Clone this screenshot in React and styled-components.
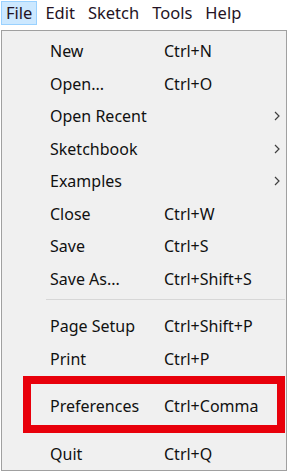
import React from 'react';
import styled, { createGlobalStyle } from 'styled-components';

const GlobalStyle = createGlobalStyle`
  html, body {
    margin: 0;
    padding: 0;
    background: #ffffff;
  }
  body {
    font-family: "Noto Sans", "Open Sans", sans-serif;
    color: #111111;
  }
`;

const Page = styled.div`
  width: 290px;
  height: 474px;
  overflow: hidden;
  background: #ffffff;
`;

const MenuBar = styled.div`
  display: flex;
  align-items: flex-start;
  gap: 3px;
  height: 30px;
  padding: 1px 0 0 1px;
  box-sizing: border-box;
`;

const MenuTitle = styled.div`
  height: 24px;
  line-height: 22px;
  padding: 0 4px;
  font-size: 16.5px;
  border: 1px solid ${(p) => (p.$active ? '#99d1ff' : 'transparent')};
  background: ${(p) => (p.$active ? '#cce8ff' : 'transparent')};
  color: #241324;
  box-sizing: border-box;
`;

const Menu = styled.div`
  margin-left: 1px;
  width: 286px;
  height: 441px;
  box-sizing: border-box;
  border: 1px solid #a0a0a0;
  background: #f0f0f0;
  padding-top: 4px;
  display: flex;
  flex-direction: column;
`;

const Row = styled.div`
  position: relative;
  display: flex;
  align-items: center;
  height: 32.5px;
  padding-left: 48px;
  font-size: 16px;
  flex-shrink: 0;

  ${(p) =>
    p.$marked &&
    `
    &::after {
      content: '';
      position: absolute;
      top: -14px;
      bottom: -11px;
      left: 21px;
      right: 1px;
      border: 8px solid #e8000b;
      pointer-events: none;
    }
  `}
`;

const Label = styled.span`
  width: 114px;
  flex-shrink: 0;
  white-space: nowrap;
`;

const Shortcut = styled.span`
  flex: 1;
  white-space: nowrap;
`;

const Arrow = styled.svg`
  width: 6px;
  height: 10px;
  margin-right: 6px;
  flex-shrink: 0;
`;

const Separator = styled.div`
  height: ${(p) => p.$h}px;
  flex-shrink: 0;
  display: flex;
  flex-direction: column;
  padding-top: 4px;
  box-sizing: border-box;
  padding-left: 44px;
  padding-right: 1px;

  &::before {
    content: '';
    display: block;
    height: 1px;
    background: ${(p) => (p.$hidden ? 'transparent' : '#d7d7d7')};
  }
`;

const Chevron = () => (
  <Arrow viewBox="0 0 6 10">
    <path d="M1 1 L5 5 L1 9" fill="none" stroke="#404040" strokeWidth="1.2" />
  </Arrow>
);

const sections = [
  [
    { label: 'New', key: 'Ctrl+N' },
    { label: 'Open...', key: 'Ctrl+O' },
    { label: 'Open Recent', sub: true },
    { label: 'Sketchbook', sub: true },
    { label: 'Examples', sub: true },
    { label: 'Close', key: 'Ctrl+W' },
    { label: 'Save', key: 'Ctrl+S' },
    { label: 'Save As...', key: 'Ctrl+Shift+S' },
  ],
  [
    { label: 'Page Setup', key: 'Ctrl+Shift+P' },
    { label: 'Print', key: 'Ctrl+P' },
  ],
  [{ label: 'Preferences', key: 'Ctrl+Comma', marked: true }],
  [{ label: 'Quit', key: 'Ctrl+Q' }],
];

const titles = ['File', 'Edit', 'Sketch', 'Tools', 'Help'];

export default function App() {
  return (
    <Page>
      <GlobalStyle />
      <MenuBar>
        {titles.map((t, i) => (
          <MenuTitle key={t} $active={i === 0}>
            {t}
          </MenuTitle>
        ))}
      </MenuBar>
      <Menu>
        {sections.map((items, si) => (
          <React.Fragment key={si}>
            {si > 0 && <Separator $h={si === 1 ? 14.75 : 15} $hidden={si > 1} />}
            {items.map((it) => (
              <Row key={it.label} $marked={it.marked}>
                <Label>{it.label}</Label>
                <Shortcut>{it.key}</Shortcut>
                {it.sub && <Chevron />}
              </Row>
            ))}
          </React.Fragment>
        ))}
      </Menu>
    </Page>
  );
}
